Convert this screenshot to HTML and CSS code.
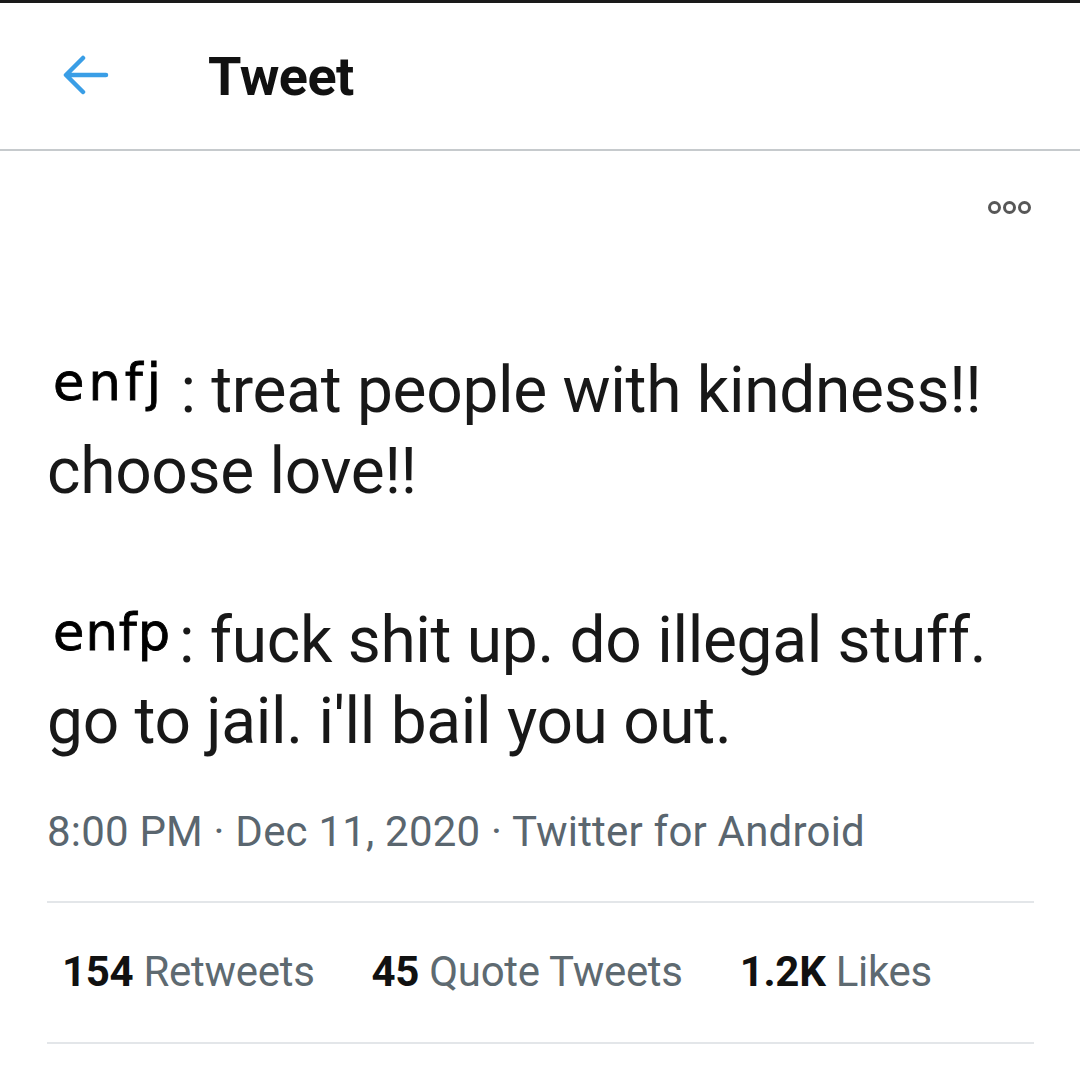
FILE: index.html
```html
<!DOCTYPE html>
<html>
<head>
<meta charset="utf-8">
<link rel="stylesheet" href="styles.css">
</head>
<body>
<div class="page">
  <header class="topbar">
    <svg class="back" width="50" height="40" viewBox="0 0 50 40">
      <path d="M45 20 H6 M22 3 L5 20 L22 37" fill="none" stroke="#3a9ee6" stroke-width="4.5" stroke-linecap="round" stroke-linejoin="round"/>
    </svg>
    <h1 class="title">Tweet</h1>
  </header>
  <main class="tweet">
    <div class="more">
      <span class="dot"></span><span class="dot"></span><span class="dot"></span>
    </div>
    <div class="body">
      <p class="line"><span class="tag">enfj</span> : treat people with kindness!!<br>choose love!!</p>
      <p class="line para2"><span class="tag tag-p">enfp</span>: fuck shit up. do illegal stuff.<br>go to jail. i'll bail you out.</p>
    </div>
    <div class="meta">8:00 PM · Dec 11, 2020 · Twitter for Android</div>
    <div class="stats">
      <span class="stat"><b>154</b> Retweets</span>
      <span class="stat"><b>45</b> Quote Tweets</span>
      <span class="stat"><b>1.2K</b> Likes</span>
    </div>
  </main>
</div>
</body>
</html>
```
FILE: styles.css
```css
html, body {
  margin: 0;
  padding: 0;
  background: #ffffff;
}
body {
  font-family: Roboto, "Liberation Sans", sans-serif;
  color: #141414;
}
.page {
  width: 1080px;
  height: 1072px;
  border-top: 3px solid #1a1a1a;
  box-sizing: border-box;
  overflow: hidden;
}
.topbar {
  height: 148px;
  display: flex;
  align-items: center;
  border-bottom: 2px solid #c6cacd;
  box-sizing: border-box;
  padding-left: 61px;
}
.back {
  display: block;
  margin-top: -2px;
}
.title {
  margin: 0 0 0 97px;
  font-size: 54px;
  font-weight: 700;
  color: #111;
  letter-spacing: -0.5px;
}
.tweet {
  padding: 0 46px 0 47px;
}
.more {
  display: flex;
  justify-content: flex-end;
  gap: 2px;
  padding-top: 50px;
  padding-right: 3px;
}
.dot {
  width: 13px;
  height: 13px;
  box-sizing: border-box;
  border: 3.5px solid #575757;
  border-radius: 50%;
}
.body {
  padding-top: 136px;
}
.line {
  margin: 0;
  font-size: 64px;
  line-height: 81px;
  color: #181818;
  letter-spacing: -0.3px;
}
.para2 {
  margin-top: 88px;
}
.tag {
  font-family: "Comic Sans MS", "DejaVu Sans", sans-serif;
  font-size: 51px;
  line-height: 1;
  letter-spacing: 4px;
  color: #000;
  -webkit-text-stroke: 0.8px #000;
  padding-left: 6px;
  vertical-align: 12px;
}
.tag-p {
  letter-spacing: 1px;
  padding-right: 8px;
}
.meta {
  margin-top: 45px;
  font-size: 42px;
  line-height: 50px;
  color: #5a666f;
  padding-bottom: 44px;
  border-bottom: 2px solid #e3e6e9;
  letter-spacing: 0.2px;
}
.stats {
  display: flex;
  gap: 57px;
  padding: 44px 0 45px 15px;
  line-height: 50px;
  border-bottom: 2px solid #e3e6e9;
  font-size: 42px;
  color: #5e6a71;
  letter-spacing: -0.3px;
}
.stats b {
  color: #111;
  font-weight: 700;
}
```
